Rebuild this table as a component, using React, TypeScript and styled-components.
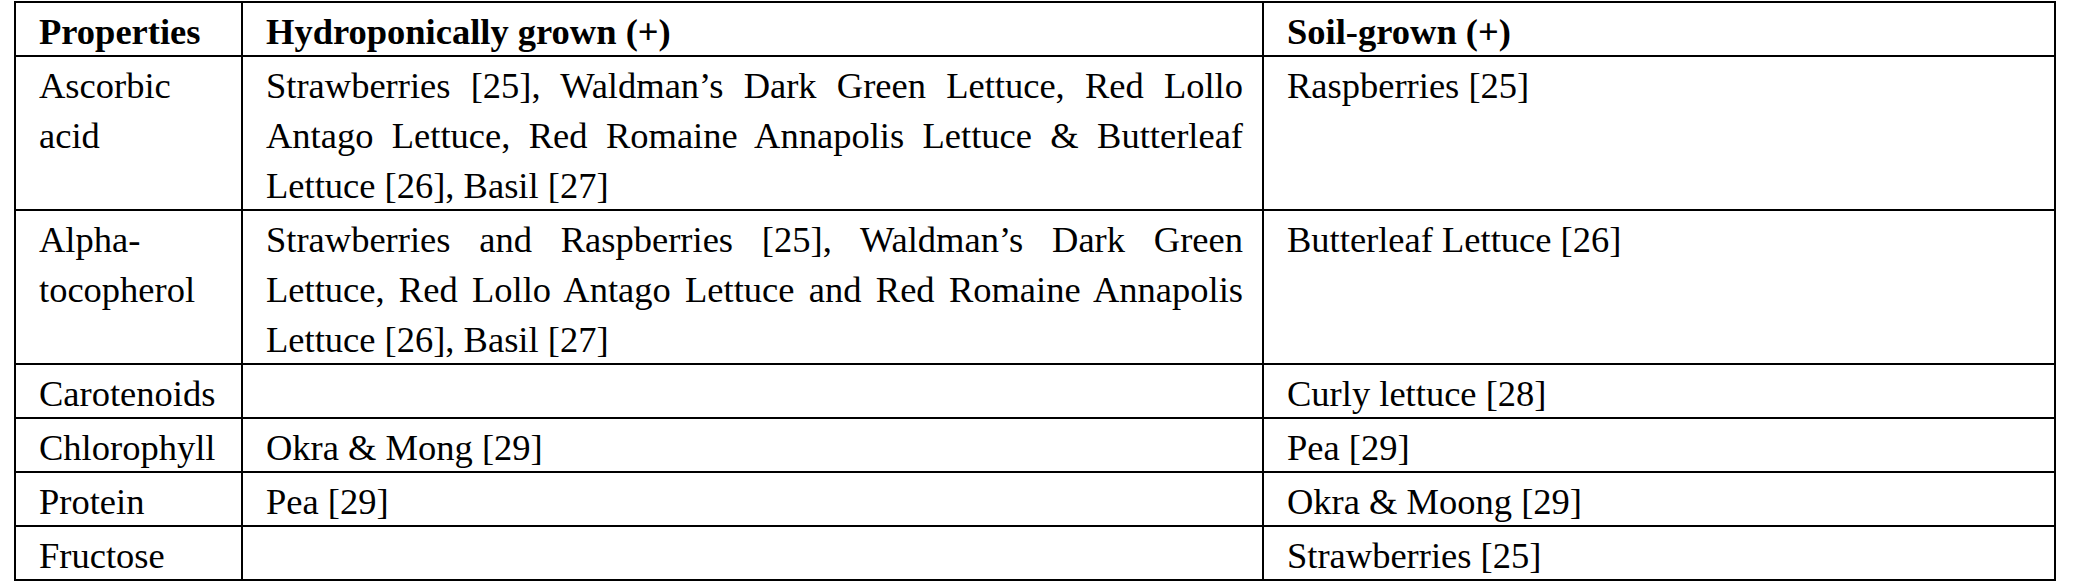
import React from "react";
import styled, { createGlobalStyle } from "styled-components";

const GlobalStyle = createGlobalStyle`
  html, body {
    margin: 0;
    padding: 0;
    background: #fff;
  }
`;

type Row = {
  property: string;
  hydro: string[];
  soil: string;
  justify?: boolean;
};

const rows: Row[] = [
  {
    property: "Ascorbic acid",
    hydro: [
      "Strawberries [25], Waldman’s Dark Green Lettuce, Red Lollo",
      "Antago Lettuce, Red Romaine Annapolis Lettuce & Butterleaf",
      "Lettuce [26], Basil [27]",
    ],
    soil: "Raspberries [25]",
    justify: true,
  },
  {
    property: "Alpha-tocopherol",
    hydro: [
      "Strawberries and Raspberries [25], Waldman’s Dark Green",
      "Lettuce, Red Lollo Antago Lettuce and Red Romaine Annapolis",
      "Lettuce [26], Basil [27]",
    ],
    soil: "Butterleaf Lettuce [26]",
    justify: true,
  },
  { property: "Carotenoids", hydro: [], soil: "Curly lettuce [28]" },
  { property: "Chlorophyll", hydro: ["Okra & Mong [29]"], soil: "Pea [29]" },
  { property: "Protein", hydro: ["Pea [29]"], soil: "Okra & Moong [29]" },
  { property: "Fructose", hydro: [], soil: "Strawberries [25]" },
];

const App: React.FC = () => {
  return (
    <>
      <GlobalStyle />
      <Page>
        <Table>
          <colgroup>
            <col style={{ width: 227 }} />
            <col style={{ width: 1021 }} />
            <col style={{ width: 792 }} />
          </colgroup>
          <thead>
            <tr>
              <Head>
                <CellText>Properties</CellText>
              </Head>
              <Head>
                <CellText>Hydroponically grown (+)</CellText>
              </Head>
              <Head>
                <CellText>Soil-grown (+)</CellText>
              </Head>
            </tr>
          </thead>
          <tbody>
            {rows.map((row) => (
              <tr key={row.property}>
                <Cell>
                  <CellText>{row.property}</CellText>
                </Cell>
                <Cell>
                  <CellText>
                    {row.hydro.map((line, i) => (
                      <Line
                        key={i}
                        $justify={!!row.justify && i < row.hydro.length - 1}
                      >
                        {line}
                      </Line>
                    ))}
                  </CellText>
                </Cell>
                <Cell>
                  <CellText>{row.soil}</CellText>
                </Cell>
              </tr>
            ))}
          </tbody>
        </Table>
      </Page>
    </>
  );
};

export default App;

const Page = styled.div`
  padding: 1px 0 0 14px;
`;

const Table = styled.table`
  width: 2040px;
  table-layout: fixed;
  border-collapse: collapse;
  font-family: "Liberation Serif", "Times New Roman", serif;
  font-size: 36.5px;
  line-height: 50px;
  color: #000;
`;

const Cell = styled.td`
  border: 2px solid #000;
  padding: 4px 19px 0 23px;
  vertical-align: top;
  text-align: left;
`;

const Head = styled(Cell).attrs({ as: "th" })`
  font-weight: bold;
`;

const CellText = styled.div`
  margin-bottom: -2px;
`;

const Line = styled.div<{ $justify: boolean }>`
  text-align: ${(p) => (p.$justify ? "justify" : "left")};
  text-align-last: ${(p) => (p.$justify ? "justify" : "left")};
  white-space: ${(p) => (p.$justify ? "normal" : "nowrap")};
`;
